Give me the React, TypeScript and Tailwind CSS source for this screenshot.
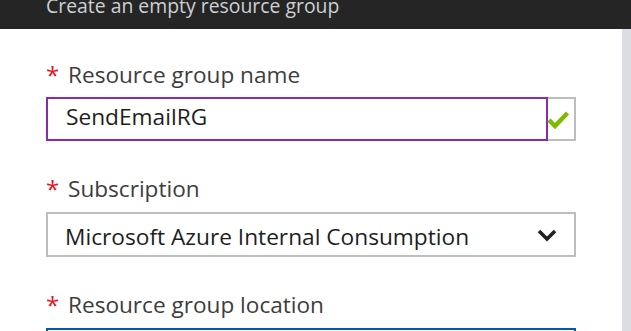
import React from "react";

function Label({ text, mt }: { text: string; mt: string }) {
  return (
    <div className={`${mt} flex h-[30px] items-start text-[22.6px] leading-[30px]`}>
      <span className="w-[22px] shrink-0 text-[24px] leading-[30px] text-[#e81123]">*</span>
      <span className="text-[#3d3d3d]">{text}</span>
    </div>
  );
}

export default function App() {
  return (
    <div
      className="flex h-[331px] w-[631px] flex-col overflow-hidden bg-white"
      style={{ fontFamily: '"Open Sans", "Noto Sans", sans-serif' }}
    >
      <div className="h-[29px] shrink-0 overflow-hidden bg-[#252525] pl-[46px]">
        <div className="-mt-[4px] text-[19.4px] leading-[19px] text-[#cdd0d4]">
          Create an empty resource group
        </div>
      </div>
      <div className="flex min-h-0 flex-1">
        <div className="flex-1 px-[46px]">
          <Label text="Resource group name" mt="mt-[31px]" />
          <div className="mt-[7px] flex h-[44px]">
            <div className="flex flex-1 items-start border-2 border-[#8a2ca6] pl-[18px]">
              <span className="text-[22.7px] leading-[35px] text-[#1e1e1e]">SendEmailRG</span>
            </div>
            <div className="flex w-[28px] items-center border-y-2 border-r-2 border-[#bdbdbd]">
              <svg width="23" height="20" viewBox="0 0 23 20" className="-ml-[1px] mt-[2px]">
                <path
                  d="M2 10 L8 16 L20.5 3"
                  fill="none"
                  stroke="#7fba00"
                  strokeWidth="4.4"
                />
              </svg>
            </div>
          </div>
          <Label text="Subscription" mt="mt-[33px]" />
          <div className="mt-[8px] flex h-[45px] items-start justify-between border-2 border-[#bdbdbd] pl-[17px] pr-[17px]">
            <span className="pt-[5px] text-[22.7px] leading-[35px] text-[#1e1e1e]">
              Microsoft Azure Internal Consumption
            </span>
            <svg width="20" height="13" viewBox="0 0 20 13" className="mt-[15px]">
              <path d="M2 2 L10 10 L18 2" fill="none" stroke="#222222" strokeWidth="3.6" />
            </svg>
          </div>
          <Label text="Resource group location" mt="mt-[33px]" />
          <div className="mt-[8px] h-[45px] border-2 border-[#0059ab]" />
        </div>
        <div className="w-[9px] shrink-0 bg-[#dcdce5]" />
      </div>
    </div>
  );
}
